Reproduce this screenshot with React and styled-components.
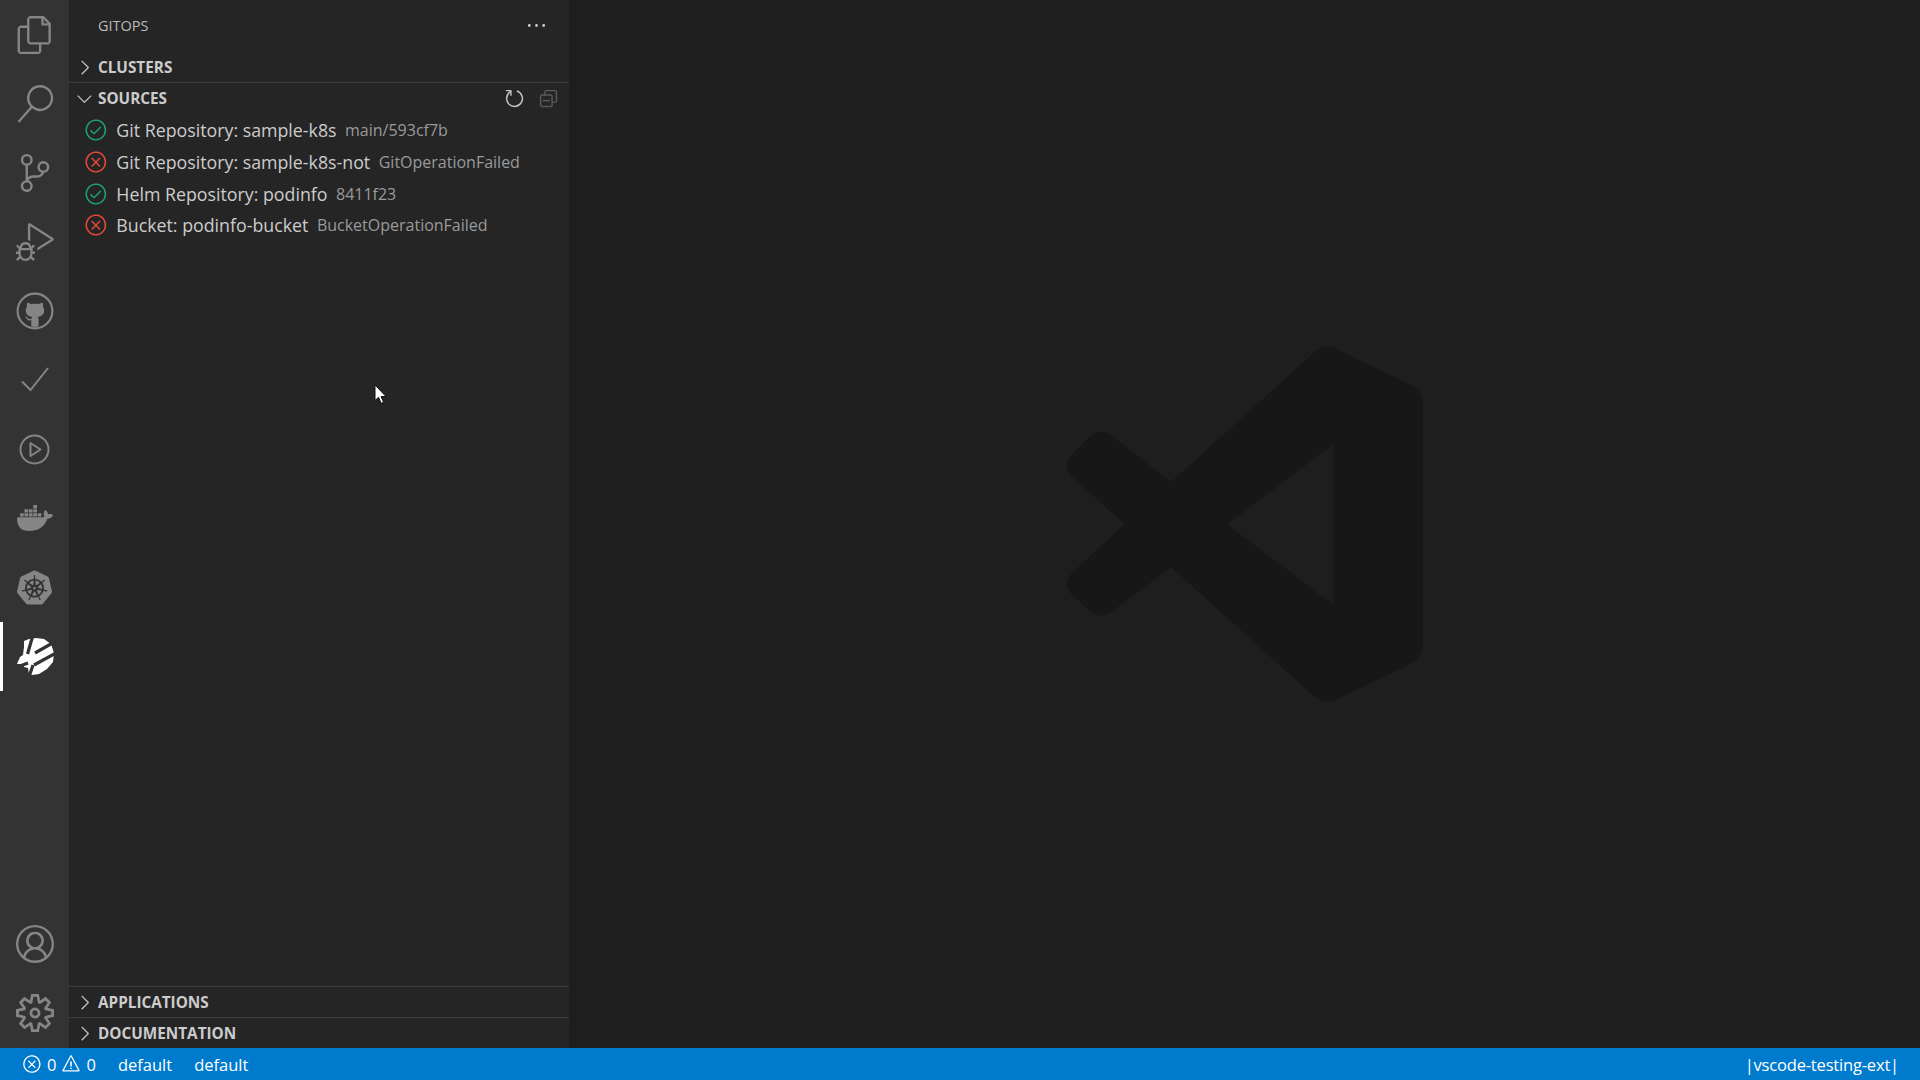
import React from "react";
import styled, { createGlobalStyle } from "styled-components";
import {
  VscFiles,
  VscSearch,
  VscSourceControl,
  VscDebugAlt,
  VscAccount,
  VscSettingsGear,
  VscChevronRight,
  VscChevronDown,
  VscEllipsis,
  VscRefresh,
  VscCollapseAll,
  VscPass,
  VscError,
  VscWarning,
} from "react-icons/vsc";
import { SiDocker, SiKubernetes } from "react-icons/si";

const GlobalStyle = createGlobalStyle`
  html, body {
    margin: 0;
    padding: 0;
    height: 100%;
    background: #1e1e1e;
    overflow: hidden;
  }
  * {
    box-sizing: border-box;
  }
`;

const GithubIcon = () => (
  <svg width="38" height="38" viewBox="0 0 35 35">
    <circle cx="17.5" cy="17.5" r="16" fill="none" stroke="currentColor" strokeWidth="2" />
    <path
      fill="currentColor"
      transform="translate(2.6 3.6) scale(0.85)"
      d="M13.5 33v-6.500c-3.6.6-4.6-.8-5.2-2.2-.4-.9-1-1.400-1.600-1.800.4-.5 1.900 0 2.800 1.400.8 1.200 2.300 1.400 4.200.8.1-.9.5-1.600 1-2-4.200-.6-7.200-2.400-7.200-7.200 0-1.500.5-2.800 1.400-3.900-.3-1-.3-2.700.3-4.300 1.400 0 3 .7 4.400 1.800 1.300-.4 2.500-.5 3.900-.5s2.600.1 3.900.5c1.400-1.100 3-1.800 4.400-1.800.6 1.600.6 3.300.3 4.300.9 1.100 1.400 2.400 1.400 3.900 0 4.800-3 6.600-7.200 7.200.7.6 1.100 1.700 1.100 3V33c-1.300.5-2.800.7-4 .7s-2.800-.2-4.300-.7z"
    />
  </svg>
);

const CheckIcon = () => (
  <svg width="35" height="35" viewBox="0 0 35 35">
    <path d="M5 18.500l8.500 8.500L31 5" fill="none" stroke="currentColor" strokeWidth="2" />
  </svg>
);

const PlayRingIcon = () => (
  <svg width="35" height="35" viewBox="0 0 35 35">
    <circle cx="17.500" cy="17.500" r="14" fill="none" stroke="currentColor" strokeWidth="2" />
    <path d="M13.500 11v13l10-6.500z" fill="none" stroke="currentColor" strokeWidth="2" strokeLinejoin="round" />
  </svg>
);

// white disc cut by the dark slits of the logo
const FluxIcon = () => (
  <svg width="46" height="42" viewBox="0 0 46 42">
    <path fill="currentColor" d="M12 6l5-2 7-1 8 1 7 5 3 9-1 9-6 7-8 5-7 1-3-1-1-6-4-1-1-3-6 0 3-7 3-2 1-8z" />
    <g stroke="#333333" strokeWidth="3.200" fill="none">
      <path d="M21 0l-5.500 19" />
      <path d="M46 5L23 18" />
      <path d="M46 17L22 30" />
      <path d="M0 34l16-6" />
      <path d="M17 42l4-12" />
    </g>
  </svg>
);

const VscodeLogo = () => (
  <svg width="356" height="354" viewBox="78 80 1067 1062">
    <path
      fill="#171717"
      fillRule="evenodd"
      d="M815 100Q860 62 890 88L1110 195Q1145 212 1145 245V975Q1145 1012 1110 1030L890 1135Q850 1155 815 1125L390 740L210 875Q180 897 150 875L90 820Q65 790 90 760L250 612L90 465Q65 432 90 405L150 345Q178 325 210 345L390 485ZM878 370L558 612L878 855Z"
    />
  </svg>
);

const PointerIcon = () => (
  <svg width="13" height="21" viewBox="0 0 13 21">
    <path d="M1 1v15.500l3.600-3.200 2.400 6 2.600-1-2.500-5.800h4.900z" fill="#fff" stroke="#111" strokeWidth="1" />
  </svg>
);

const Page = styled.div`
  width: 1920px;
  height: 1080px;
  display: flex;
  flex-direction: column;
  position: relative;
  font-family: "Open Sans", "Noto Sans", sans-serif;
  color: #cccccc;
`;

const Workbench = styled.div`
  flex: 1;
  min-height: 0;
  display: flex;
`;

const ActivityBar = styled.nav`
  width: 69px;
  flex-shrink: 0;
  background: #333333;
  display: flex;
  flex-direction: column;
  justify-content: space-between;
`;

const ActivityGroup = styled.div`
  display: flex;
  flex-direction: column;
`;

const ActivityItem = styled.div`
  height: 69.1px;
  display: flex;
  align-items: center;
  justify-content: center;
  color: ${(props) => (props.active ? "#ffffff" : "#858585")};
  box-shadow: ${(props) => (props.active ? "inset 3px 0 0 #ffffff" : "none")};
`;

const SideBar = styled.aside`
  width: 500px;
  flex-shrink: 0;
  background: #252526;
  display: flex;
  flex-direction: column;
`;

const SideTitle = styled.div`
  height: 52.200px;
  flex-shrink: 0;
  display: flex;
  align-items: center;
  justify-content: space-between;
  padding: 0 21px 2px 29px;
  font-size: 14.500px;
  color: #bbbbbb;
`;

const TitleAction = styled.span`
  display: flex;
  color: #cccccc;
`;

const Section = styled.section`
  display: flex;
  flex-direction: column;
  flex: ${(props) => (props.grow ? 1 : "none")};
  min-height: 0;
  border-top: ${(props) => (props.divided ? "1.500px solid #3c3c3d" : "none")};
`;

const SectionHeader = styled.header`
  height: 30px;
  flex-shrink: 0;
  display: flex;
  align-items: center;
  padding-left: 2.600px;
  padding-right: 9px;
  font-size: 15.300px;
  font-weight: 700;
  color: #cccccc;
`;

const Twisty = styled.span`
  width: 26.400px;
  display: flex;
  justify-content: center;
  color: #c5c5c5;
`;

const HeaderActions = styled.div`
  margin-left: auto;
  display: flex;
  align-items: center;
  gap: 11.500px;
`;

const HeaderAction = styled.span`
  display: flex;
  color: ${(props) => (props.dim ? "#5a5a5a" : "#c5c5c5")};
`;

const Tree = styled.ul`
  list-style: none;
  margin: 0;
  padding: 1px 0 0;
`;

const TreeRow = styled.li`
  height: 31.800px;
  display: flex;
  align-items: center;
  padding-left: 15px;
  white-space: nowrap;
`;

const StatusGlyph = styled.span`
  width: 32.300px;
  display: flex;
  color: ${(props) => (props.ok ? "#1e9e7a" : "#e5493a")};
`;

const RowLabel = styled.span`
  font-size: 17.800px;
  color: #cccccc;
`;

const RowDescription = styled.span`
  margin-left: 8.500px;
  font-size: 16px;
  color: #9a9a9a;
`;

const Editor = styled.main`
  flex: 1;
  background: #1e1e1e;
  display: flex;
  align-items: center;
  justify-content: center;
`;

const StatusBar = styled.footer`
  height: 32px;
  flex-shrink: 0;
  background: #007acc;
  color: #ffffff;
  display: flex;
  align-items: center;
  padding: 0 21px 0 22px;
  font-size: 16.500px;
`;

const StatusProblems = styled.div`
  display: flex;
  align-items: center;
  gap: 5px;
  margin-right: 22px;
`;

const StatusText = styled.span`
  margin-right: 22px;
`;

const StatusRight = styled.span`
  margin-left: auto;
  letter-spacing: -0.18px;
`;

const Pointer = styled.span`
  position: absolute;
  left: 374px;
  top: 384px;
  display: flex;
`;

const topItems = [
  { id: "files", icon: <VscFiles size={38} /> },
  { id: "search", icon: <VscSearch size={38} /> },
  { id: "scm", icon: <VscSourceControl size={38} /> },
  { id: "debug", icon: <VscDebugAlt size={38} /> },
  { id: "github", icon: <GithubIcon /> },
  { id: "todo", icon: <CheckIcon /> },
  { id: "run", icon: <PlayRingIcon /> },
  { id: "docker", icon: <SiDocker size={36} /> },
  { id: "k8s", icon: <SiKubernetes size={35} /> },
  { id: "gitops", icon: <FluxIcon />, active: true },
];

const sources = [
  { id: 1, ok: true, label: "Git Repository: sample-k8s", des: "main/593cf7b" },
  { id: 2, ok: false, label: "Git Repository: sample-k8s-not", des: "GitOperationFailed" },
  { id: 3, ok: true, label: "Helm Repository: podinfo", des: "8411f23" },
  { id: 4, ok: false, label: "Bucket: podinfo-bucket", des: "BucketOperationFailed" },
];

const App = () => {
  return (
    <Page>
      <GlobalStyle />
      <Workbench>
        <ActivityBar>
          <ActivityGroup>
            {topItems.map((i) => (
              <ActivityItem key={i.id} active={i.active}>
                {i.icon}
              </ActivityItem>
            ))}
          </ActivityGroup>
          <ActivityGroup>
            <ActivityItem>
              <VscAccount size={38} />
            </ActivityItem>
            <ActivityItem>
              <VscSettingsGear size={38} />
            </ActivityItem>
          </ActivityGroup>
        </ActivityBar>
        <SideBar>
          <SideTitle>
            GITOPS
            <TitleAction>
              <VscEllipsis size={23} />
            </TitleAction>
          </SideTitle>
          <Section>
            <SectionHeader>
              <Twisty>
                <VscChevronRight size={23} />
              </Twisty>
              CLUSTERS
            </SectionHeader>
          </Section>
          <Section divided grow>
            <SectionHeader>
              <Twisty>
                <VscChevronDown size={23} />
              </Twisty>
              SOURCES
              <HeaderActions>
                <HeaderAction>
                  <VscRefresh size={23} />
                </HeaderAction>
                <HeaderAction dim>
                  <VscCollapseAll size={23} />
                </HeaderAction>
              </HeaderActions>
            </SectionHeader>
            <Tree>
              {sources.map((i) => (
                <TreeRow key={i.id}>
                  <StatusGlyph ok={i.ok}>
                    {i.ok ? <VscPass size={24} /> : <VscError size={24} />}
                  </StatusGlyph>
                  <RowLabel>{i.label}</RowLabel>
                  <RowDescription>{i.des}</RowDescription>
                </TreeRow>
              ))}
            </Tree>
          </Section>
          <Section divided>
            <SectionHeader>
              <Twisty>
                <VscChevronRight size={23} />
              </Twisty>
              APPLICATIONS
            </SectionHeader>
          </Section>
          <Section divided>
            <SectionHeader>
              <Twisty>
                <VscChevronRight size={23} />
              </Twisty>
              DOCUMENTATION
            </SectionHeader>
          </Section>
        </SideBar>
        <Editor>
          <VscodeLogo />
        </Editor>
      </Workbench>
      <StatusBar>
        <StatusProblems>
          <VscError size={20} />
          <span>0</span>
          <VscWarning size={20} />
          <span>0</span>
        </StatusProblems>
        <StatusText>default</StatusText>
        <StatusText>default</StatusText>
        <StatusRight>|vscode-testing-ext|</StatusRight>
      </StatusBar>
      <Pointer>
        <PointerIcon />
      </Pointer>
    </Page>
  );
};

export default App;
